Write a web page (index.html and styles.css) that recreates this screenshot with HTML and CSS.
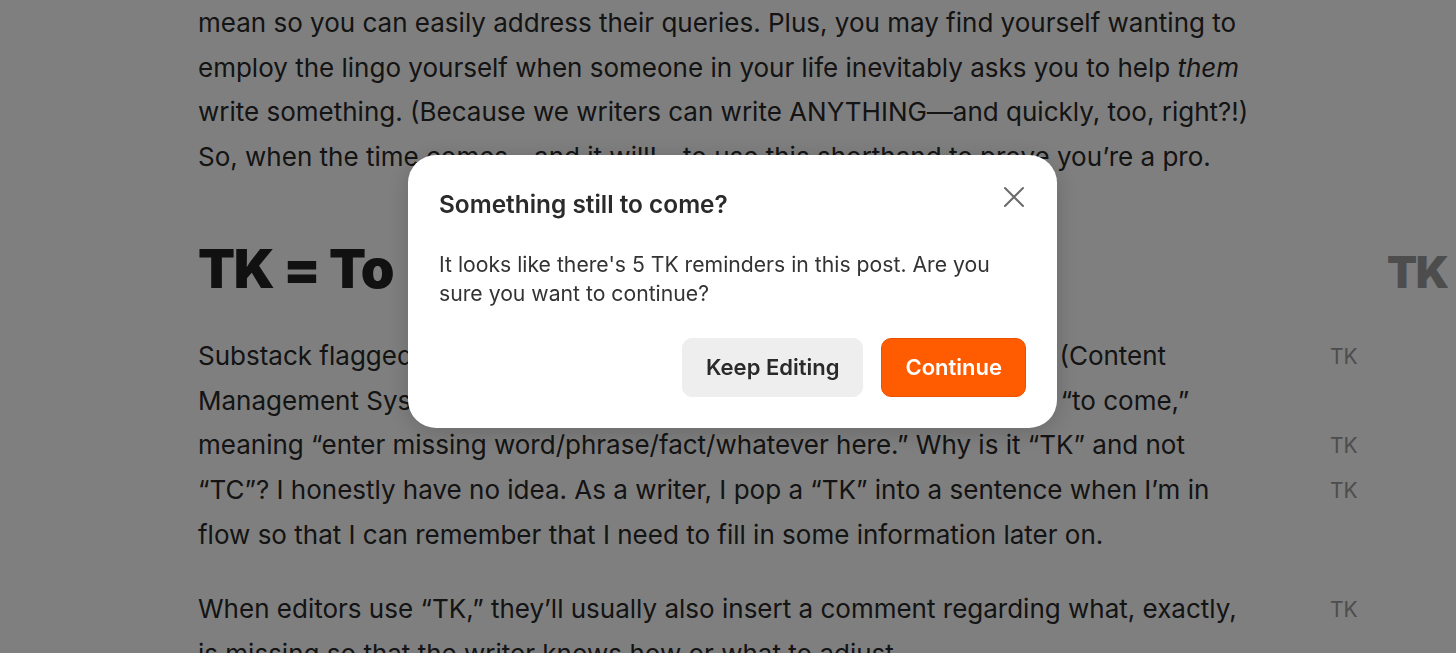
FILE: index.html
```html
<!DOCTYPE html>
<html lang="en">
<head>
<meta charset="utf-8">
<title>Something still to come?</title>
<link rel="stylesheet" href="styles.css">
</head>
<body>
<main class="post">
  <section class="block">
    <p class="text">mean so you can easily address their queries. Plus, you may find yourself wanting to<br>employ the lingo yourself when someone in your life inevitably asks you to help <em>them</em><br>write something. (Because we writers can write ANYTHING—and quickly, too, right?!)<br>So, when the time comes—and it will!—to use this shorthand to prove you’re a pro.</p>
    <div class="marks"></div>
  </section>
  <section class="block heading-row">
    <h2 class="heading">TK = To&#8194;Come</h2>
    <div class="heading-mark">TK</div>
  </section>
  <section class="block para2">
    <p class="text">Substack flagged all the TK reminders I had left for myself in the CMS (Content<br>Management System)—in the world of publishing, TK is shorthand for “to come,”<br>meaning “enter missing word/phrase/fact/whatever here.” Why is it “TK” and not<br>“TC”? I honestly have no idea. As a writer, I pop a “TK” into a sentence when I’m in<br>flow so that I can remember that I need to fill in some information later on.</p>
    <div class="marks">TK<br><br>TK<br>TK</div>
  </section>
  <section class="block para3">
    <p class="text">When editors use “TK,” they’ll usually also insert a comment regarding what, exactly,<br>is missing so that the writer knows how or what to adjust.</p>
    <div class="marks">TK</div>
  </section>
</main>

<div class="backdrop"></div>
<div class="dialog" role="dialog" aria-labelledby="dlg-title">
  <div class="dialog-head">
    <h3 class="dialog-title" id="dlg-title">Something still to come?</h3>
    <button class="close" aria-label="Close">
      <svg viewBox="0 0 24 24" width="24" height="24"><path d="M3 3L21 21M21 3L3 21" stroke="#6b6b6b" stroke-width="2" stroke-linecap="round" fill="none"/></svg>
    </button>
  </div>
  <p class="dialog-body">It looks like there's 5 TK reminders in this post. Are you<br>sure you want to continue?</p>
  <div class="actions">
    <button class="btn btn-secondary">Keep Editing</button>
    <button class="btn btn-primary">Continue</button>
  </div>
</div>
</body>
</html>
```
FILE: styles.css
```css
html, body {
  margin: 0;
  padding: 0;
}
body {
  width: 1456px;
  height: 653px;
  overflow: hidden;
  background: #ffffff;
  color: #282828;
  font-family: Inter, "Liberation Sans", sans-serif;
}
.post {
  padding-left: 198px;
  padding-top: 1px;
}
.block {
  display: grid;
  grid-template-columns: 1132px auto;
  align-items: start;
}
.text {
  margin: 0;
  font-size: 26px;
  line-height: 44.7px;
  white-space: nowrap;
}
.marks {
  font-size: 21px;
  line-height: 44.7px;
  color: #9a9a9a;
  padding-top: 1px;
}
.heading-row {
  margin-top: 56px;
  align-items: baseline;
}
.heading {
  margin: 0;
  font-size: 54px;
  line-height: 66px;
  font-weight: 900;
  color: #222222;
  letter-spacing: -1.2px;
}
.heading-mark {
  padding-left: 57px;
  font-size: 44px;
  font-weight: 900;
  letter-spacing: -1.5px;
  color: #9a9a9a;
}
.para2 {
  margin-top: 32px;
}
.para3 {
  margin-top: 29.5px;
}

.backdrop {
  position: fixed;
  inset: 0;
  background: rgba(0, 0, 0, 0.5);
}
.dialog {
  position: fixed;
  left: 408px;
  top: 155px;
  width: 649px;
  box-sizing: border-box;
  padding: 34px 31px 31px 31px;
  background: #ffffff;
  border-radius: 28px;
  box-shadow: 0 4px 24px rgba(0, 0, 0, 0.18);
}
.dialog-head {
  display: flex;
  justify-content: space-between;
  align-items: flex-start;
}
.dialog-title {
  margin: 0;
  font-size: 24.4px;
  line-height: 30px;
  font-weight: 600;
  color: #2b2b2b;
}
.close {
  margin: -4px 0 0 0;
  padding: 0;
  border: 0;
  background: transparent;
  width: 24px;
  height: 24px;
  display: flex;
}
.dialog-body {
  margin: 31px 0 0 0;
  font-size: 21.2px;
  line-height: 29px;
  color: #333333;
}
.actions {
  margin-top: 29.5px;
  display: flex;
  justify-content: flex-end;
  gap: 18px;
}
.btn {
  height: 59px;
  box-sizing: border-box;
  border-radius: 10px;
  font-family: Inter, "Liberation Sans", sans-serif;
  font-size: 22px;
  font-weight: 600;
  padding: 0 23px;
  cursor: pointer;
}
.btn-secondary {
  background: #eeeeee;
  border: 1px solid #eeeeee;
  color: #2a2a2a;
}
.btn-primary {
  background: #ff5b00;
  border: 1px solid #ea5200;
  color: #ffffff;
}
```
